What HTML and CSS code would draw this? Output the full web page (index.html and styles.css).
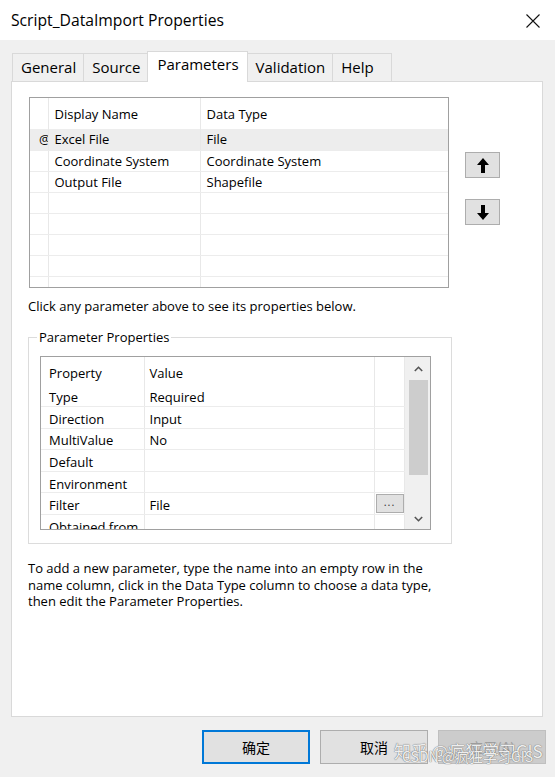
FILE: index.html
```html
<!DOCTYPE html>
<html>
<head>
<meta charset="utf-8">
<link rel="stylesheet" href="styles.css">
</head>
<body>
<div class="window">
  <div class="titlebar">
    <span class="title">Script_DataImport Properties</span>
    <svg class="close" width="14" height="14" viewBox="0 0 14 14"><path d="M0.5 0.5 L13.5 13.5 M13.5 0.5 L0.5 13.5" stroke="#111" stroke-width="1.1" fill="none"/></svg>
  </div>
  <div class="tabs">
    <div class="tab">General</div>
    <div class="tab">Source</div>
    <div class="tab active">Parameters</div>
    <div class="tab">Validation</div>
    <div class="tab last">Help</div>
  </div>
  <div class="panel">
    <div class="top-row">
      <div class="params">
        <table class="grid ptable">
          <colgroup><col class="c-rh"><col class="c-name"><col></colgroup>
          <tr class="head"><td></td><td>Display Name</td><td>Data Type</td></tr>
          <tr class="sel"><td class="rh">@</td><td>Excel File</td><td>File</td></tr>
          <tr><td></td><td>Coordinate System</td><td>Coordinate System</td></tr>
          <tr><td></td><td>Output File</td><td>Shapefile</td></tr>
          <tr><td></td><td></td><td></td></tr>
          <tr><td></td><td></td><td></td></tr>
          <tr><td></td><td></td><td></td></tr>
          <tr><td></td><td></td><td></td></tr>
          <tr><td></td><td></td><td></td></tr>
        </table>
      </div>
      <div class="arrows">
        <div class="arrow-btn"><svg width="12" height="15" viewBox="0 0 12 15"><path d="M6 0 L12 7 H8 V15 H4 V7 H0 Z" fill="#000"/></svg></div>
        <div class="arrow-btn"><svg width="12" height="15" viewBox="0 0 12 15"><path d="M6 15 L12 8 H8 V0 H4 V8 H0 Z" fill="#000"/></svg></div>
      </div>
    </div>
    <p class="hint">Click any parameter above to see its properties below.</p>
    <fieldset class="group">
      <legend>Parameter Properties</legend>
      <div class="props">
        <div class="props-view">
          <table class="grid rtable">
            <colgroup><col class="c-prop"><col class="c-val"><col class="c-btn"></colgroup>
            <tr class="head"><td>Property</td><td>Value</td><td></td></tr>
            <tr><td>Type</td><td>Required</td><td></td></tr>
            <tr><td>Direction</td><td>Input</td><td></td></tr>
            <tr><td>MultiValue</td><td>No</td><td></td></tr>
            <tr><td>Default</td><td></td><td></td></tr>
            <tr><td>Environment</td><td></td><td></td></tr>
            <tr><td>Filter</td><td>File</td><td class="btn-cell"><span class="dots">...</span></td></tr>
            <tr><td>Obtained from</td><td></td><td></td></tr>
          </table>
        </div>
        <div class="scrollbar">
          <svg class="chev" width="9" height="6" viewBox="0 0 9 6"><path d="M0.8 5 L4.5 1.3 L8.2 5" stroke="#555" stroke-width="1.6" fill="none"/></svg>
          <div class="thumb"></div>
          <div class="track"></div>
          <svg class="chev" width="9" height="6" viewBox="0 0 9 6"><path d="M0.8 1 L4.5 4.7 L8.2 1" stroke="#555" stroke-width="1.6" fill="none"/></svg>
        </div>
      </div>
    </fieldset>
    <p class="help">To add a new parameter, type the name into an empty row in the<br>name column, click in the Data Type column to choose a data type,<br>then edit the Parameter Properties.</p>
  </div>
  <div class="buttons">
    <div class="btn default">确定</div>
    <div class="btn">取消</div>
    <div class="btn disabled">应用(A)</div>
  </div>
  <div class="watermark">
    <span class="wm1">知乎 @疯狂学习GIS</span>
    <span class="wm2">CSDN @疯狂学习GIS</span>
  </div>
</div>
</body>
</html>
```

FILE: styles.css
```css
* { box-sizing: border-box; }
html, body { margin: 0; padding: 0; }
body {
  width: 555px;
  height: 777px;
  overflow: hidden;
  background: #f0f0f0;
  font-family: "Open Sans", "Noto Sans", sans-serif;
  color: #000;
}
.window { position: relative; width: 555px; height: 777px; }

.titlebar {
  height: 40px;
  background: #fff;
  display: flex;
  align-items: center;
  justify-content: space-between;
  padding: 0 15px 0 11px;
}
.title { font-size: 15.7px; color: #000; }
.close { display: block; margin-top: 1px; }

.tabs {
  display: flex;
  align-items: flex-end;
  margin: 11px 0 0 12px;
  height: 30px;
}
.tab {
  height: 28px;
  padding: 3px 7px 0 8px;
  border: 1px solid #d9d9d9;
  border-bottom: none;
  margin-right: -1px;
  background: #f0f0f0;
  font-size: 15px;
  line-height: 21px;
  color: #000;
}
.tab.active {
  height: 31px;
  margin-bottom: -1px;
  background: #fff;
  padding: 2px 8px 0 9px;
  position: relative;
  z-index: 1;
}
.tab.last { padding-right: 17px; }

.panel {
  margin: 0 12px 0 11px;
  height: 636px;
  background: #fff;
  border: 1px solid #d9d9d9;
  padding: 15px 0 0 16px;
}

.top-row { display: flex; }
.params {
  margin-left: 1px;
  width: 420px;
  height: 191px;
  border: 1px solid #a0a0a0;
  overflow: hidden;
}
.grid {
  border-collapse: collapse;
  table-layout: fixed;
  font-size: 13px;
}
.grid td {
  padding: 0 0 0 6px;
  white-space: nowrap;
  overflow: hidden;
  border-right: 1px solid #e8e8e8;
  border-bottom: 1px solid #ececec;
  vertical-align: middle;
}
.ptable { width: 418px; }
.ptable .c-rh { width: 18px; }
.ptable .c-name { width: 152px; }
.ptable tr { height: 21px; }
.ptable tr.head { height: 31px; }
.ptable tr.head td { border-bottom: none; }
.ptable tr.sel { background: #ededed; }
.ptable td.rh { padding-left: 9px; }
.ptable tr td:last-child { border-right: none; }

.arrows {
  margin-left: 16px;
  padding-top: 55px;
  display: flex;
  flex-direction: column;
  gap: 21px;
}
.arrow-btn {
  width: 35px;
  height: 26px;
  background: #e1e1e1;
  border: 1px solid #adadad;
  display: flex;
  align-items: center;
  justify-content: center;
}
.arrow-btn svg { display: block; }

.hint {
  margin: 9px 0 0 0;
  font-size: 13px;
  line-height: 18px;
}

.group {
  margin: 13px 0 0 0;
  width: 424px;
  border: 1px solid #dcdcdc;
  padding: 10px 0 13px 11px;
  min-width: 0;
}
.group legend {
  font-size: 13px;
  line-height: 18px;
  padding: 0 2px;
  margin-left: -3px;
}
.props {
  width: 391px;
  height: 174px;
  border: 1px solid #a0a0a0;
  display: flex;
  overflow: hidden;
}
.props-view { width: 364px; overflow: hidden; }
.rtable { width: 364px; }
.rtable .c-prop { width: 103px; }
.rtable .c-val { width: 230px; }
.rtable tr { height: 21.6px; }
.rtable tr.head { height: 28px; }
.rtable tr.head td { border-bottom: none; }
.rtable td { padding: 3px 0 0 5px; line-height: 16px; }
.rtable td:first-child { padding-left: 8px; }
.rtable td.btn-cell { padding: 0 0 0 1px; }
.dots {
  display: block;
  width: 28px;
  height: 19px;
  background: #e1e1e1;
  border: 1px solid #adadad;
  font-size: 11px;
  line-height: 13px;
  text-align: center;
  color: #333;
  letter-spacing: 1px;
}

.scrollbar {
  width: 25px;
  background: #f0f0f0;
  display: flex;
  flex-direction: column;
  align-items: center;
  padding: 9px 0 7px 2px;
}
.scrollbar .chev { display: block; flex: none; }
.thumb {
  width: 19px;
  height: 95px;
  background: #cdcdcd;
  margin-top: 8px;
  flex: none;
}
.track { flex: 1; }

.help {
  margin: 16px 0 0 0;
  font-size: 13px;
  line-height: 16.5px;
}

.buttons {
  display: flex;
  justify-content: flex-end;
  gap: 10px;
  padding: 13px 9px 0 0;
}
.btn {
  width: 108px;
  height: 34px;
  background: #e1e1e1;
  border: 1px solid #adadad;
  display: flex;
  align-items: center;
  justify-content: center;
  font-family: "Noto Sans CJK SC", sans-serif;
  font-size: 14px;
  color: #000;
}
.btn.default { border: 2px solid #0078d7; }
.btn.disabled { background: #cccccc; border-color: #bfbfbf; color: #a0a0a0; }

.watermark {
  position: absolute;
  left: 394px;
  top: 740px;
  width: 150px;
  height: 30px;
  font-family: "Noto Sans CJK SC", sans-serif;
  color: rgba(255, 255, 255, 0.9);
}
.watermark span {
  position: absolute;
  white-space: nowrap;
  text-shadow: 0 0 1px #777, 0 0 1px #777;
}
.wm1 { left: 0; top: 0; font-size: 17px; line-height: 22px; }
.wm2 { left: 8px; top: 6px; font-size: 14px; line-height: 20px; }
```
